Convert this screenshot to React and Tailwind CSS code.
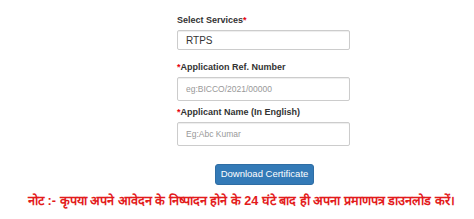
export default function App() {
    return (
        <div className="w-[474px] h-[219px] bg-white overflow-hidden font-['Liberation_Sans',Arial,sans-serif]">
            <div className="ml-[177px] w-[173px] pt-[14px]">
                <label className="block text-[9px] font-bold text-[#333] leading-[12px]">
                    Select Services<span className="text-red-600">*</span>
                </label>
                <div className="mt-[4px] h-[20px] border border-[#ccc] rounded-[2px] flex items-center px-[8px] text-[10px] text-[#333] shadow-[inset_0_1px_1px_rgba(0,0,0,0.075)]">
                    RTPS
                </div>

                <label className="block mt-[11px] text-[9px] font-bold text-[#333] leading-[12px]">
                    <span className="text-red-600">*</span>Application Ref. Number
                </label>
                <input
                    className="block mt-[4px] w-full h-[24px] border border-[#ccc] rounded-[2px] px-[8px] text-[8.5px] text-[#333] placeholder:text-[#999] outline-none shadow-[inset_0_1px_1px_rgba(0,0,0,0.075)]"
                    placeholder="eg:BICCO/2021/00000"
                />

                <label className="block mt-[5px] text-[9px] font-bold text-[#333] leading-[12px]">
                    <span className="text-red-600">*</span>Applicant Name (In English)
                </label>
                <input
                    className="block mt-[4px] w-full h-[24px] border border-[#ccc] rounded-[2px] px-[8px] text-[8.5px] text-[#333] placeholder:text-[#999] outline-none shadow-[inset_0_1px_1px_rgba(0,0,0,0.075)]"
                    placeholder="Eg:Abc Kumar"
                />
            </div>

            <div className="flex justify-center pl-[55px] mt-[18px]">
                <button className="w-[99px] h-[21px] bg-[#337ab7] border border-[#2e6da4] rounded-[3px] text-white text-[9.5px]">
                    Download Certificate
                </button>
            </div>

            <p className="mt-[8px] pl-[28px] text-[12.7px] font-bold text-[#e31b1b] leading-[16px] whitespace-nowrap">
                नोट :- कृपया अपने आवेदन के निष्पादन होने के 24 घंटे बाद ही अपना प्रमाणपत्र डाउनलोड करें।
            </p>
        </div>
    );
}
